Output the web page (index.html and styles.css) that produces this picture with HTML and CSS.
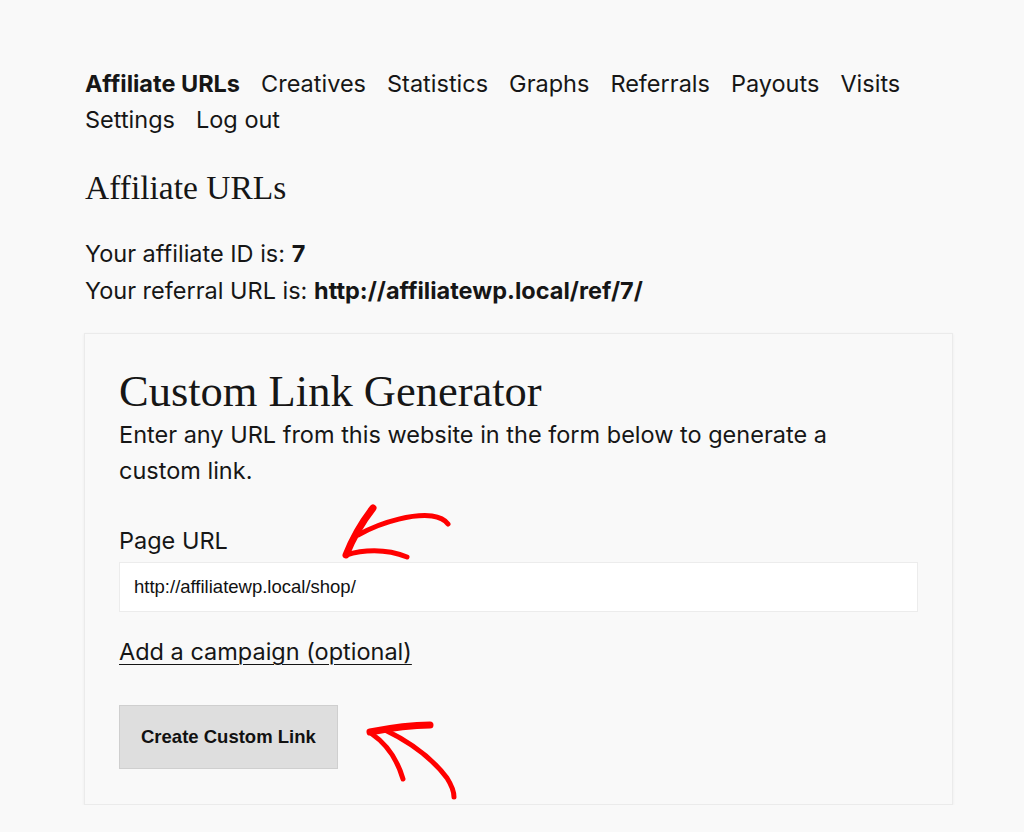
FILE: index.html
```html
<!DOCTYPE html>
<html lang="en">
<head>
    <meta charset="UTF-8" />
    <title>Affiliate URLs</title>
    <link rel="stylesheet" href="styles.css">
</head>
<body>
    <div class="page">
        <nav class="tabs">
            <a href="#" class="active">Affiliate URLs</a>
            <a href="#">Creatives</a>
            <a href="#">Statistics</a>
            <a href="#">Graphs</a>
            <a href="#">Referrals</a>
            <a href="#">Payouts</a>
            <a href="#">Visits</a>
            <a href="#">Settings</a>
            <a href="#">Log out</a>
        </nav>

        <h2 class="page-title">Affiliate URLs</h2>

        <p class="info">Your affiliate ID is: <strong>7</strong></p>
        <p class="info">Your referral URL is: <strong>http://affiliatewp.local/ref/7/</strong></p>

        <div class="generator">
            <h3>Custom Link Generator</h3>
            <p class="desc">Enter any URL from this website in the form below to generate a custom link.</p>

            <label class="field-label" for="page-url">Page URL</label>
            <input class="field" id="page-url" type="text" value="http://affiliatewp.local/shop/">

            <a href="#" class="campaign">Add a campaign (optional)</a>

            <button class="btn">Create Custom Link</button>
        </div>
    </div>

    <!-- hand drawn annotation arrows -->
    <svg class="marks" width="1024" height="832" viewBox="0 0 1024 832">
        <g fill="none" stroke="#ff0000" stroke-linecap="round" stroke-linejoin="round">
            <path d="M373 508 C362 522 352 540 346 555" stroke-width="7"/>
            <path d="M346 555 C362 550 385 548 407 557" stroke-width="5"/>
            <path d="M358 535 C385 520 415 514 432 516 C440 517 445 520 448 524" stroke-width="5"/>
            <path d="M370 732 C390 728 410 725 430 725" stroke-width="7"/>
            <path d="M372 734 C388 745 398 762 403 779" stroke-width="5"/>
            <path d="M385 730 C410 742 432 758 447 778 C452 786 454 792 454 797" stroke-width="5"/>
        </g>
    </svg>
</body>
</html>
```

FILE: styles.css
```css
* {
    margin: 0;
    padding: 0;
    box-sizing: border-box;
}

body {
    background: #f9f9f9;
    color: #161616;
    font-family: Inter, 'Noto Sans', sans-serif;
    font-size: 23.5px;
    line-height: 36px;
}

.page {
    width: 869px;
    margin-left: 84px;
    padding-top: 66px;
}

.tabs {
    display: flex;
    flex-wrap: wrap;
    column-gap: 21px;
    line-height: 36px;
    padding-left: 1px;
}

.tabs a {
    color: #161616;
    text-decoration: none;
}

.tabs a.active {
    font-weight: 700;
}

.page-title {
    font-family: 'Liberation Serif', serif;
    font-weight: 400;
    font-size: 33.5px;
    line-height: 40px;
    margin: 30px 0 28px 1px;
}

.info {
    line-height: 36.5px;
    padding-left: 1px;
}

.info strong {
    font-weight: 700;
}

.generator {
    margin-top: 24px;
    background: #f9f9f9;
    border: 1px solid #ebebeb;
    box-shadow: 0 1px 3px rgba(0, 0, 0, 0.06);
    padding: 31px 34px 35px;
    display: flex;
    flex-direction: column;
    align-items: flex-start;
}

.generator h3 {
    font-family: 'Liberation Serif', serif;
    font-weight: 400;
    font-size: 44.5px;
    line-height: 52px;
}

.desc {
    line-height: 36px;
    max-width: 750px;
}

.field-label {
    margin-top: 34px;
    line-height: 36px;
}

.field {
    width: 100%;
    height: 50px;
    margin-top: 3px;
    border: 1px solid #ececec;
    background: #fff;
    padding: 0 14px;
    font-family: 'Liberation Sans', Arial, sans-serif;
    font-size: 18.5px;
    color: #111;
}

.campaign {
    margin-top: 22px;
    color: #161616;
    text-decoration: underline;
    text-underline-offset: 4px;
    text-decoration-thickness: 1px;
    line-height: 36px;
}

.btn {
    margin-top: 35px;
    height: 64px;
    padding: 0 21px;
    background: #dedede;
    border: 1px solid #cfcfcf;
    font-family: 'Liberation Sans', Arial, sans-serif;
    font-weight: 700;
    font-size: 18.5px;
    color: #111;
}

.marks {
    position: absolute;
    top: 0;
    left: 0;
    pointer-events: none;
}
```
